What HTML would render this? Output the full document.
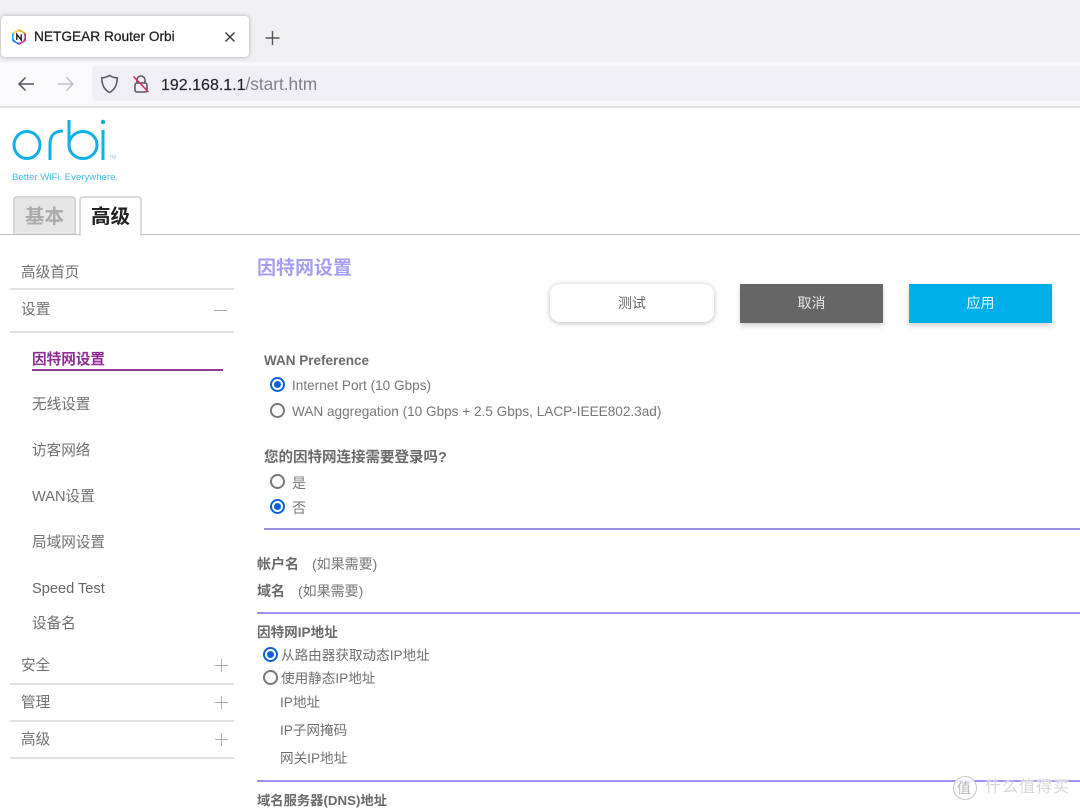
<!DOCTYPE html>
<html lang="zh"><head><meta charset="utf-8"><title>NETGEAR Router Orbi</title>
<style>
html,body{margin:0;padding:0;background:#fff}
body{width:1080px;height:810px;position:relative;overflow:hidden;font-family:"Liberation Sans","Noto Sans CJK SC",sans-serif;color:#666;font-size:14.6px}
.b,.t{position:absolute}
.t{white-space:nowrap;line-height:20px;filter:blur(.35px)}
.l{position:absolute;height:2px;background:#e0e0e0}
.p{position:absolute;height:2px;left:257px;right:0;background:#9b92ee}
.r{position:absolute;width:15px;height:15px;border-radius:50%;box-sizing:border-box;border:2px solid #77767b;background:#fff;filter:blur(.25px)}
.r.on{border-color:#0b62d6}
.r.on:after{content:"";position:absolute;left:2px;top:2px;width:7px;height:7px;border-radius:50%;background:#0b62d6}
.pm{position:absolute;width:13px;height:13px}
.pm:before{content:"";position:absolute;left:0;right:0;top:6px;height:1px;background:#a8a8a8}
.pm.plus:after{content:"";position:absolute;top:0;bottom:0;left:6px;width:1px;background:#a8a8a8}
.btn{position:absolute;top:284px;height:39px;line-height:39px;text-align:center;font-size:14px;box-shadow:0 3px 5px rgba(0,0,0,.18)}
.s{font-size:13.6px}
.f{font-size:14px}
</style></head><body>

<div class="b" style="left:0;top:0;width:1080px;height:62px;background:#f0f0f2"></div>
<div class="b" style="left:0;top:62px;width:1080px;height:44px;background:#f9f9fb"></div>
<div class="b" style="left:0;top:106px;width:1080px;height:2px;background:#dfdfe1"></div>
<div class="b" style="left:1px;top:16px;width:248px;height:41px;background:#fff;border-radius:4px;box-shadow:0 0 4px rgba(0,0,0,.3)"></div>

<svg class="b" style="left:10px;top:28px" width="18" height="18" viewBox="0 0 18 18"><path d="M9 1 16 5 9 9z" fill="#f5a623"/><path d="M16 5V13L9 9z" fill="#a52fb0"/><path d="M16 13 9 17 9 9z" fill="#d9368b"/><path d="M9 17 2 13 9 9z" fill="#2f6fdc"/><path d="M2 13V5L9 9z" fill="#20b5e8"/><path d="M2 5 9 1V9z" fill="#f0d040"/><circle cx="9" cy="9" r="5.500" fill="#fff"/><path d="M6.800 12V6.200L11.200 12V6.200" fill="none" stroke="#222" stroke-width="1.400"/></svg>
<div class="t" style="left:34px;top:27px;font-size:13.7px;color:#1e1e22;-webkit-text-stroke:.25px #1e1e22">NETGEAR Router Orbi</div>
<svg class="b" style="left:224px;top:31px" width="12" height="12" viewBox="0 0 12 12"><path d="M1.500 1.500 10.500 10.500M10.500 1.500 1.500 10.500" stroke="#333" stroke-width="1.300"/></svg>
<svg class="b" style="left:265px;top:31px" width="15" height="14" viewBox="0 0 15 14"><path d="M7.500 0V14M.5 7H14.500" stroke="#555" stroke-width="1.400"/></svg>

<svg class="b" style="left:17px;top:76px" width="18" height="16" viewBox="0 0 18 16"><path d="M17 8H2M8.500 1.500 2 8l6.500 6.500" fill="none" stroke="#55555a" stroke-width="1.500"/></svg>
<svg class="b" style="left:57px;top:76px" width="18" height="16" viewBox="0 0 18 16"><path d="M1 8H16M9.500 1.500 16 8l-6.500 6.500" fill="none" stroke="#c2c2c6" stroke-width="1.500"/></svg>
<div class="b" style="left:92px;top:66px;width:988px;height:35px;background:#f0f0f4;border-radius:4px 0 0 4px"></div>
<svg class="b" style="left:100px;top:74px" width="19" height="20" viewBox="0 0 19 20"><path d="M9.500 1.500C7 3 4.500 3.700 1.800 3.800 1.800 10 3.500 15.500 9.500 18.500 15.500 15.500 17.200 10 17.200 3.800 14.500 3.700 12 3 9.500 1.500Z" fill="none" stroke="#55555a" stroke-width="1.500"/></svg>
<svg class="b" style="left:132px;top:74px" width="18" height="20" viewBox="0 0 18 20"><path d="M5 9V6a4 4 0 0 1 8 0v3" fill="none" stroke="#55555a" stroke-width="1.500"/><rect x="3" y="9" width="12" height="9" rx="2" fill="none" stroke="#55555a" stroke-width="1.500"/><path d="M1.500 2.500 16.500 18" stroke="#e0245e" stroke-width="1.600"/></svg>
<div class="t" style="left:161px;top:74px;font-size:16px;color:#1f1f24;-webkit-text-stroke:.15px #1f1f24">192.168.1.1<span style="color:#808087;font-size:17.200px;-webkit-text-stroke:0">/start.htm</span></div>

<svg class="b" style="left:10px;top:116px;filter:blur(.3px)" width="110" height="50" viewBox="10 116 110 50" role="img"><title>orbi</title>
<g fill="none" stroke="#12aee8" stroke-width="3">
<ellipse cx="27" cy="145" rx="13" ry="13.500"/>
<path d="M50 160V144C50 135 55 131 63 131"/>
<path d="M69 120V145"/><ellipse cx="83" cy="145" rx="14" ry="13.500"/>
<path d="M103 130V160"/></g>
<circle cx="103" cy="122" r="2.200" fill="#12aee8"/></svg>
<div class="t" style="left:109px;top:148px;font-size:5px;color:#8fcde8">TM</div>
<div class="t" style="left:12px;top:168px;font-size:9.600px;color:#45bbea">Better WiFi. Everywhere.</div>

<div class="b" style="left:13px;top:196px;width:63px;height:38px;box-sizing:border-box;background:#e6e6e6;border:2px solid #d6d6d6;border-bottom:0;border-radius:4px 4px 0 0"></div>
<div class="b" style="left:79px;top:196px;width:63px;height:40px;box-sizing:border-box;background:#fff;border:2px solid #dadada;border-bottom:0;border-radius:4px 4px 0 0;z-index:2"></div>
<div class="b" style="left:0;top:234px;width:1080px;height:1px;background:#bdbdbd"></div>
<div class="t" style="left:25px;top:207px;font-size:19.500px;font-weight:700;color:#aaa">基本</div>
<div class="t" style="left:91px;top:207px;font-size:19.500px;font-weight:700;color:#222;z-index:3">高级</div>

<div class="t" style="left:21px;top:263px;color:#707070">高级首页</div>
<div class="l" style="left:10px;top:288px;width:224px"></div>
<div class="t" style="left:21px;top:300px;color:#707070">设置</div>
<div class="pm" style="left:214px;top:304px"></div>
<div class="l" style="left:10px;top:331px;width:224px"></div>
<div class="t" style="left:32px;top:350px;font-weight:700;color:#8f2a96">因特网设置</div>
<div class="b" style="left:32px;top:369px;width:191px;height:2px;background:#96378f"></div>
<div class="t" style="left:32px;top:395px;color:#707070">无线设置</div>
<div class="t" style="left:32px;top:441px;color:#707070">访客网络</div>
<div class="t" style="left:32px;top:487px;color:#707070">WAN设置</div>
<div class="t" style="left:32px;top:533px;color:#707070">局域网设置</div>
<div class="t" style="left:32px;top:579px;color:#666">Speed Test</div>
<div class="t" style="left:32px;top:614px;color:#707070">设备名</div>
<div class="t" style="left:21px;top:656px;color:#707070">安全</div>
<div class="pm plus" style="left:215px;top:659px"></div>
<div class="l" style="left:10px;top:683px;width:224px"></div>
<div class="t" style="left:21px;top:693px;color:#707070">管理</div>
<div class="pm plus" style="left:215px;top:696px"></div>
<div class="l" style="left:10px;top:720px;width:224px"></div>
<div class="t" style="left:21px;top:730px;color:#707070">高级</div>
<div class="pm plus" style="left:215px;top:733px"></div>
<div class="l" style="left:10px;top:757px;width:224px"></div>

<div class="t" style="left:257px;top:259px;font-size:19px;font-weight:700;color:#a59df0">因特网设置</div>

<div class="btn" style="left:550px;width:164px;height:38px;line-height:39px;background:#fff;border-radius:10px;color:#666;box-shadow:0 1px 6px rgba(0,0,0,.28)">测试</div>
<div class="btn" style="left:740px;width:143px;background:#666;color:#e8e8e8">取消</div>
<div class="btn" style="left:909px;width:143px;background:#00aeea;color:#eaf8ff">应用</div>

<div class="t" style="left:264px;top:351px;font-size:13.500px;font-weight:700;color:#6a6a6a">WAN Preference</div>
<div class="r on" style="left:270px;top:377px"></div>
<div class="t s" style="left:292px;top:376px;color:#777">Internet Port (10 Gbps)</div>
<div class="r" style="left:270px;top:403px"></div>
<div class="t s" style="left:292px;top:402px;color:#777">WAN aggregation (10 Gbps + 2.5 Gbps, LACP-IEEE802.3ad)</div>

<div class="t" style="left:264px;top:448px;font-size:14.500px;font-weight:700;color:#6a6a6a">您的因特网连接需要登录吗?</div>
<div class="r" style="left:270px;top:474px"></div>
<div class="t f" style="left:292px;top:473px;color:#777">是</div>
<div class="r on" style="left:270px;top:499px"></div>
<div class="t f" style="left:292px;top:498px;color:#777">否</div>
<div class="p" style="left:264px;top:528px;background:#9a92e0"></div>

<div class="t f" style="left:257px;top:554px;font-weight:700;color:#6a6a6a">帐户名</div>
<div class="t f" style="left:312px;top:554px;color:#777">(如果需要)</div>
<div class="t f" style="left:257px;top:581px;font-weight:700;color:#6a6a6a">域名</div>
<div class="t f" style="left:298px;top:581px;color:#777">(如果需要)</div>
<div class="p" style="top:612px"></div>

<div class="t s" style="left:257px;top:623px;font-weight:700;color:#6a6a6a">因特网IP地址</div>
<div class="r on" style="left:263px;top:647px"></div>
<div class="t s" style="left:281px;top:646px;color:#707070">从路由器获取动态IP地址</div>
<div class="r" style="left:263px;top:670px"></div>
<div class="t s" style="left:281px;top:669px;color:#707070">使用静态IP地址</div>
<div class="t s" style="left:280px;top:693px;color:#707070">IP地址</div>
<div class="t s" style="left:280px;top:721px;color:#707070">IP子网掩码</div>
<div class="t s" style="left:280px;top:749px;color:#707070">网关IP地址</div>
<div class="p" style="top:780px"></div>
<div class="t" style="left:257px;top:791px;font-size:13.300px;font-weight:700;color:#6a6a6a">域名服务器(DNS)地址</div>

<div class="b" style="left:953px;top:776px;width:22px;height:22px;border-radius:50%;background:rgba(255,255,255,.85);border:1px solid #c8c8c8"></div>
<div class="t" style="left:957px;top:778px;font-size:14px;color:#b5b5b5">值</div>
<div class="t" style="left:985px;top:778px;font-size:16px;letter-spacing:1px;color:#d6d6d6;text-shadow:0 0 2px #fff,0 0 3px #fff">什么值得买</div>
</body></html>
